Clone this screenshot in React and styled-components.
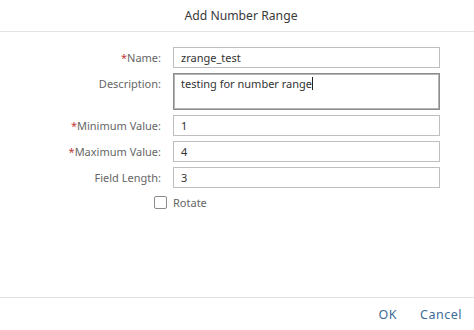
import React from "react";
import styled, { createGlobalStyle } from "styled-components";

const Global = createGlobalStyle`
  html, body { margin: 0; padding: 0; background: #fff; }
  body { font-family: "Noto Sans", "Open Sans", Arial, sans-serif; }
  * { box-sizing: border-box; }
`;

const Dialog = styled.div`
  width: 474px;
  height: 330px;
  display: flex;
  flex-direction: column;
  background: #fff;
`;

const Header = styled.div`
  height: 32px;
  border-bottom: 1px solid #e3e3e3;
  display: flex;
  align-items: center;
  justify-content: center;
  font-size: 12.2px;
  color: #3a3a3a;
  padding-left: 8px;
`;

const Form = styled.div`
  display: grid;
  grid-template-columns: 161px 267px;
  column-gap: 12px;
  row-gap: 5px;
  padding-top: 15px;
`;

const Label = styled.div`
  text-align: right;
  font-size: 11px;
  line-height: 21px;
  color: #666;
  white-space: nowrap;
`;

const Star = styled.span`
  color: #c23a3a;
`;

const Input = styled.div`
  height: ${(p) => (p.$tall ? "37px" : "21px")};
  border: 1px solid ${(p) => (p.$focus ? "#8c8c8c" : "#bfbfbf")};
  box-shadow: ${(p) => (p.$focus ? "inset 0 0 0 1px #b5b5b5" : "none")};
  padding: 0 7px;
  font-size: 11px;
  line-height: 19px;
  color: #333;
  display: flex;
  align-items: flex-start;
  white-space: pre;
`;

const Caret = styled.span`
  display: inline-block;
  width: 1px;
  height: 13px;
  background: #222;
  margin-top: 3px;
`;

const CheckRow = styled.label`
  display: flex;
  align-items: center;
  gap: 6px;
  padding-left: 154px;
  margin-top: 7px;
  font-size: 11px;
  color: #666;
`;

const Box = styled.span`
  width: 13px;
  height: 13px;
  border: 1px solid #8a8a8a;
  border-radius: 2px;
  background: #fff;
`;

const Spacer = styled.div`
  flex: 1;
`;

const Footer = styled.div`
  height: 33px;
  border-top: 1px solid #e3e3e3;
  display: flex;
  align-items: center;
  justify-content: flex-end;
  gap: 23px;
  padding-right: 12px;
`;

const Btn = styled.span`
  font-size: 12.5px;
  letter-spacing: 0.5px;
  color: #3d6b98;
`;

const fields = [
  { label: "Name:", req: true, value: "zrange_test" },
  { label: "Description:", value: "testing for number range", tall: true, focus: true },
  { label: "Minimum Value:", req: true, value: "1" },
  { label: "Maximum Value:", req: true, value: "4" },
  { label: "Field Length:", value: "3" },
];

export default function App() {
  return (
    <>
      <Global />
      <Dialog>
        <Header>Add Number Range</Header>
        <Form>
          {fields.map((f) => (
            <React.Fragment key={f.label}>
              <Label>
                {f.req && <Star>*</Star>}
                {f.label}
              </Label>
              <Input $tall={f.tall} $focus={f.focus}>
                {f.value}
                {f.focus && <Caret />}
              </Input>
            </React.Fragment>
          ))}
        </Form>
        <CheckRow>
          <Box />
          Rotate
        </CheckRow>
        <Spacer />
        <Footer>
          <Btn>OK</Btn>
          <Btn>Cancel</Btn>
        </Footer>
      </Dialog>
    </>
  );
}
